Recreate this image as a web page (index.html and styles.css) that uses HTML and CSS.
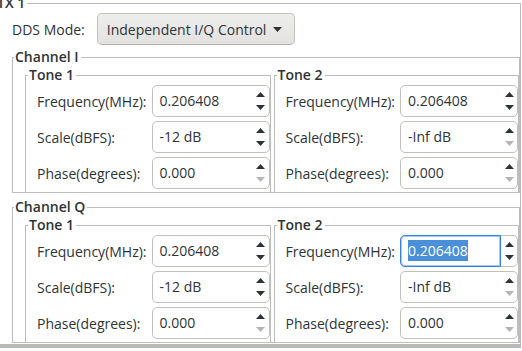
FILE: index.html
```html
<!DOCTYPE html>
<html lang="en">
<head>
    <meta charset="utf-8"/>
    <meta name="viewport" content="width=device-width, initial-scale=1"/>
    <link rel="stylesheet" href="styles.css">
</head>
<body>

    <fieldset class="frame tx">
        <legend>TX 1</legend>

        <div class="mode-row">
            <span class="label">DDS Mode:</span>
            <div class="combo">
                <span>Independent I/Q Control</span>
                <svg class="caret" width="9" height="5" viewBox="0 0 9 5"><path d="M0 0H9L4.5 5Z"/></svg>
            </div>
        </div>

        <!-- channel I -->
        <fieldset class="frame channel">
            <legend>Channel I</legend>
            <div class="tones">
                <fieldset class="frame tone">
                    <legend>Tone 1</legend>
                    <div class="tone-grid">
                        <span class="label">Frequency(MHz):</span>
                        <div class="spin">
                            <span class="entry">0.206408</span>
                            <span class="arrows"><svg class="up" viewBox="0 0 9 5"><path d="M0 5H9L4.5 0Z"/></svg><svg class="down" viewBox="0 0 9 5"><path d="M0 0H9L4.5 5Z"/></svg></span>
                        </div>
                        <span class="label">Scale(dBFS):</span>
                        <div class="spin">
                            <span class="entry">-12 dB</span>
                            <span class="arrows"><svg class="up" viewBox="0 0 9 5"><path d="M0 5H9L4.5 0Z"/></svg><svg class="down" viewBox="0 0 9 5"><path d="M0 0H9L4.5 5Z"/></svg></span>
                        </div>
                        <span class="label">Phase(degrees):</span>
                        <div class="spin">
                            <span class="entry">0.000</span>
                            <span class="arrows"><svg class="up" viewBox="0 0 9 5"><path d="M0 5H9L4.5 0Z"/></svg><svg class="down off" viewBox="0 0 9 5"><path d="M0 0H9L4.5 5Z"/></svg></span>
                        </div>
                    </div>
                </fieldset>
                <fieldset class="frame tone">
                    <legend>Tone 2</legend>
                    <div class="tone-grid">
                        <span class="label">Frequency(MHz):</span>
                        <div class="spin">
                            <span class="entry">0.206408</span>
                            <span class="arrows"><svg class="up" viewBox="0 0 9 5"><path d="M0 5H9L4.5 0Z"/></svg><svg class="down" viewBox="0 0 9 5"><path d="M0 0H9L4.5 5Z"/></svg></span>
                        </div>
                        <span class="label">Scale(dBFS):</span>
                        <div class="spin">
                            <span class="entry">-Inf dB</span>
                            <span class="arrows"><svg class="up" viewBox="0 0 9 5"><path d="M0 5H9L4.5 0Z"/></svg><svg class="down off" viewBox="0 0 9 5"><path d="M0 0H9L4.5 5Z"/></svg></span>
                        </div>
                        <span class="label">Phase(degrees):</span>
                        <div class="spin">
                            <span class="entry">0.000</span>
                            <span class="arrows"><svg class="up" viewBox="0 0 9 5"><path d="M0 5H9L4.5 0Z"/></svg><svg class="down off" viewBox="0 0 9 5"><path d="M0 0H9L4.5 5Z"/></svg></span>
                        </div>
                    </div>
                </fieldset>
            </div>
        </fieldset>

        <!-- channel Q -->
        <fieldset class="frame channel channel-q">
            <legend>Channel Q</legend>
            <div class="tones">
                <fieldset class="frame tone">
                    <legend>Tone 1</legend>
                    <div class="tone-grid">
                        <span class="label">Frequency(MHz):</span>
                        <div class="spin">
                            <span class="entry">0.206408</span>
                            <span class="arrows"><svg class="up" viewBox="0 0 9 5"><path d="M0 5H9L4.5 0Z"/></svg><svg class="down" viewBox="0 0 9 5"><path d="M0 0H9L4.5 5Z"/></svg></span>
                        </div>
                        <span class="label">Scale(dBFS):</span>
                        <div class="spin">
                            <span class="entry">-12 dB</span>
                            <span class="arrows"><svg class="up" viewBox="0 0 9 5"><path d="M0 5H9L4.5 0Z"/></svg><svg class="down" viewBox="0 0 9 5"><path d="M0 0H9L4.5 5Z"/></svg></span>
                        </div>
                        <span class="label">Phase(degrees):</span>
                        <div class="spin">
                            <span class="entry">0.000</span>
                            <span class="arrows"><svg class="up" viewBox="0 0 9 5"><path d="M0 5H9L4.5 0Z"/></svg><svg class="down off" viewBox="0 0 9 5"><path d="M0 0H9L4.5 5Z"/></svg></span>
                        </div>
                    </div>
                </fieldset>
                <fieldset class="frame tone">
                    <legend>Tone 2</legend>
                    <div class="tone-grid">
                        <span class="label">Frequency(MHz):</span>
                        <div class="spin focus">
                            <span class="entry"><span class="sel">0.206408</span></span>
                            <span class="arrows"><svg class="up" viewBox="0 0 9 5"><path d="M0 5H9L4.5 0Z"/></svg><svg class="down" viewBox="0 0 9 5"><path d="M0 0H9L4.5 5Z"/></svg></span>
                        </div>
                        <span class="label">Scale(dBFS):</span>
                        <div class="spin">
                            <span class="entry">-Inf dB</span>
                            <span class="arrows"><svg class="up" viewBox="0 0 9 5"><path d="M0 5H9L4.5 0Z"/></svg><svg class="down off" viewBox="0 0 9 5"><path d="M0 0H9L4.5 5Z"/></svg></span>
                        </div>
                        <span class="label">Phase(degrees):</span>
                        <div class="spin">
                            <span class="entry">0.000</span>
                            <span class="arrows"><svg class="up" viewBox="0 0 9 5"><path d="M0 5H9L4.5 0Z"/></svg><svg class="down off" viewBox="0 0 9 5"><path d="M0 0H9L4.5 5Z"/></svg></span>
                        </div>
                    </div>
                </fieldset>
            </div>
        </fieldset>
    </fieldset>

</body>
</html>
```

FILE: styles.css
```css
/* gtk-like frames, spin buttons and combo */

body {
    margin: 0;
    background-color: #fff;
    color: #2e3436;
    font-family: "Open Sans", "Noto Sans", sans-serif;
    font-size: 14px;
    overflow: hidden;
}

.frame {
    margin: 0;
    padding: 0;
    min-width: 0;
    border: 1px solid #bdbdbb;
}

/* legend sits inside the padding, so pull it back to the border */
.frame > legend {
    font-weight: 600;
    line-height: 18px;
    padding: 0 2px 0 1px;
}

.tx {
    margin: -6px 1px 0 -8px;
    padding: 1px 0 1px 19px;
    border-bottom: 4px solid #b9b9b7;
}

.tx > legend {
    margin-left: -16px;
}

.mode-row {
    display: flex;
    align-items: center;
    gap: 12px;
    height: 32px;
}

.combo {
    display: flex;
    align-items: center;
    justify-content: space-between;
    box-sizing: border-box;
    width: 198px;
    height: 32px;
    padding: 0 12px 0 9px;
    border: 1px solid #c3c0bc;
    border-bottom-color: #b3afaa;
    border-radius: 5px;
    background: linear-gradient(to bottom, #eeeeed, #e2e1e0);
}

.caret {
    fill: #2e3436;
}

.channel {
    margin-top: 3px;
    padding: 0 0 0 12px;
}

.channel > legend {
    margin-left: -11px;
}

.channel-q {
    margin-top: 5px;
}

.tones {
    display: grid;
    grid-template-columns: 1fr 1fr;
    column-gap: 3px;
}

.tone {
    border-bottom: none;
    padding: 1px 0 3px 11px;
}

.tone > legend {
    margin-left: -9px;
}

.tone-grid {
    display: grid;
    grid-template-columns: auto 1fr;
    grid-auto-rows: 32px;
    column-gap: 5px;
    row-gap: 4px;
    align-items: center;
}

.label {
    white-space: nowrap;
}

.spin {
    display: flex;
    box-sizing: border-box;
    height: 32px;
    border: 1px solid #c3c0bc;
    border-radius: 5px;
    background-color: #fff;
}

.entry {
    flex: 1;
    padding-left: 7px;
    line-height: 30px;
    white-space: nowrap;
}

.arrows {
    display: flex;
    flex-direction: column;
    justify-content: space-between;
    align-items: center;
    width: 16px;
    padding: 6px 0 6px;
    box-sizing: border-box;
}

.arrows svg {
    width: 9px;
    height: 5px;
    fill: #2e3436;
}

.arrows svg.off {
    fill: #b4b6b6;
}

.spin.focus .entry {
    margin: -1px 0 -1px -1px;
    padding-left: 7px;
    border: 1px solid #3584e4;
    border-radius: 5px 0 0 5px;
    box-shadow: inset 0 0 0 1px rgba(53, 132, 228, 0.45);
}

.sel {
    background-color: #4a90d9;
    color: #fff;
    padding: 1px 0;
}
```
